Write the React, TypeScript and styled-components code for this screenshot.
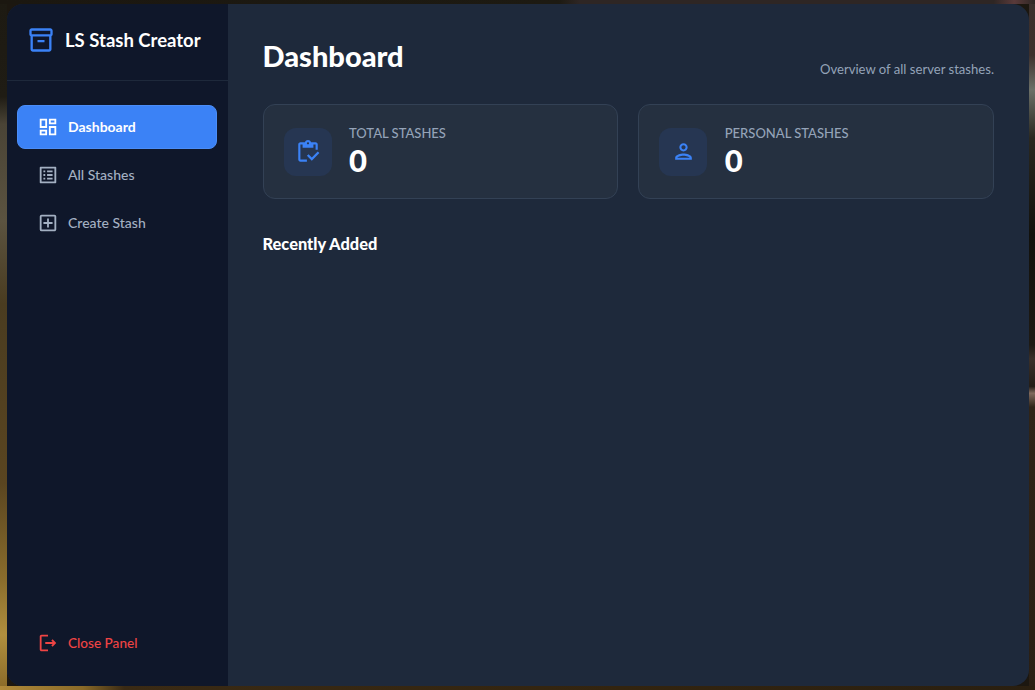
import { createGlobalStyle, styled } from "styled-components";
import {
  MdOutlineAddBox,
  MdOutlineDashboard,
  MdOutlineInventory,
  MdOutlineInventory2,
  MdOutlineListAlt,
  MdOutlineLogout,
  MdOutlinePerson,
} from "react-icons/md";

const GlobalStyle = createGlobalStyle`
  html, body {
    margin: 0;
    height: 100%;
  }

  body {
    font-family: "Lato", "Noto Sans", sans-serif;
    overflow: hidden;
    background-color: #1c1710;
    background-image:
      linear-gradient(90deg, #1b1710 0%, #1d1a12 54%, #2e2624 56%, #2e2624 96%, #5a3a3a 98%, #2e2624 100%),
      linear-gradient(90deg, #b08a3a 0%, #8a6a28 8%, #3a2a14 12%, #33240f 60%, #2a1f10 100%),
      linear-gradient(180deg, #1d1a12 0%, #1f1c14 14%, #4a4436 18%, #5b5340 32%, #4a3c20 44%, #5a4520 70%, #8a6d2c 84%, #b08f3e 92%, #8a6a28 100%),
      linear-gradient(180deg, #3a2f2c 0%, #3d302d 8%, #6c7068 13%, #2a2820 20%, #12110c 34%, #1e1a14 50%, #3a302a 52%, #241d16 56%, #80695c 57%, #2f2418 59%, #2a1f14 100%);
    background-size: 100% 4px, 100% 4px, 7px 100%, 6px 100%;
    background-position: left top, left bottom, left top, right top;
    background-repeat: no-repeat;
  }
`;

const Screen = styled.div`
  box-sizing: border-box;
  width: 1035px;
  height: 690px;
  padding: 4px 6px 4px 7px;
`;

const Panel = styled.div`
  display: flex;
  height: 100%;
  border-radius: 16px;
  overflow: hidden;
  background: #1e293b;
`;

const Sidebar = styled.aside`
  box-sizing: border-box;
  width: 222px;
  flex-shrink: 0;
  display: flex;
  flex-direction: column;
  background: #0f172a;
  border-right: 1px solid #1e293b;
`;

const Brand = styled.div`
  height: 77px;
  box-sizing: border-box;
  display: flex;
  align-items: center;
  gap: 10px;
  padding: 0 0 4px 20px;
  border-bottom: 1px solid #1e293b;
  color: #3b82f6;
`;

const BrandName = styled.span`
  color: #fff;
  font-size: 18.5px;
  font-weight: 700;
`;

const Nav = styled.nav`
  flex: 1;
  display: flex;
  flex-direction: column;
  gap: 4px;
  padding: 24px 11px 0 10px;
`;

const NavItem = styled.div<{ $active?: boolean }>`
  height: 44px;
  box-sizing: border-box;
  display: flex;
  align-items: center;
  gap: 9px;
  padding: 0 0 1px 19px;
  border: 1px solid ${(p) => (p.$active ? "#4b8df7" : "transparent")};
  border-radius: 8px;
  font-size: 14px;
  font-weight: ${(p) => (p.$active ? 700 : 500)};
  color: ${(p) => (p.$active ? "#fff" : "#a3b0c2")};
  background: ${(p) => (p.$active ? "#3b82f6" : "transparent")};
`;

const CloseItem = styled(NavItem)`
  margin: 0 11px 21px 10px;
  font-size: 13.6px;
  color: #ef4444;
`;

const Main = styled.main`
  flex: 1;
  padding: 34px 35px 0 33.5px;
`;

const Header = styled.header`
  display: flex;
  justify-content: space-between;
  align-items: flex-end;
  margin-bottom: 30px;
`;

const Title = styled.h1`
  margin: 0;
  color: #fff;
  font-size: 29px;
  line-height: 36px;
  font-weight: 900;
`;

const Subtitle = styled.p`
  margin: 0 0 -4px;
  color: #94a3b8;
  font-size: 13.1px;
  line-height: 18px;
`;

const Stats = styled.section`
  display: grid;
  grid-template-columns: 1fr 1fr;
  gap: 20px;
`;

const Card = styled.div`
  height: 95px;
  box-sizing: border-box;
  display: flex;
  align-items: center;
  gap: 17.5px;
  padding: 0 20px;
  background: #253040;
  border: 1px solid #334155;
  border-radius: 12px;
`;

const IconTile = styled.div`
  width: 48px;
  height: 48px;
  display: flex;
  align-items: center;
  justify-content: center;
  border-radius: 12px;
  background: #263652;
  color: #3b82f6;
`;

const CardText = styled.div`
  display: flex;
  flex-direction: column;
  gap: 3px;
  margin-bottom: 3px;
`;

const CardLabel = styled.div`
  color: #94a3b8;
  font-size: 13px;
  line-height: 16px;
  font-weight: 500;
`;

const CardValue = styled.div`
  color: #fff;
  font-size: 31px;
  line-height: 32px;
  font-weight: 900;
`;

const SectionTitle = styled.h2`
  margin: 35px 0 0;
  color: #fff;
  font-size: 16.4px;
  line-height: 20px;
  font-weight: 900;
`;

export default function App() {
  return (
    <>
      <GlobalStyle />
      <Screen>
        <Panel>
          <Sidebar>
            <Brand>
              <MdOutlineInventory2 size={28} />
              <BrandName>LS Stash Creator</BrandName>
            </Brand>
            <Nav>
              <NavItem $active>
                <MdOutlineDashboard size={22} />
                Dashboard
              </NavItem>
              <NavItem>
                <MdOutlineListAlt size={22} />
                All Stashes
              </NavItem>
              <NavItem>
                <MdOutlineAddBox size={22} />
                Create Stash
              </NavItem>
            </Nav>
            <CloseItem>
              <MdOutlineLogout size={22} />
              Close Panel
            </CloseItem>
          </Sidebar>
          <Main>
            <Header>
              <Title>Dashboard</Title>
              <Subtitle>Overview of all server stashes.</Subtitle>
            </Header>
            <Stats>
              <Card>
                <IconTile>
                  <MdOutlineInventory size={26} />
                </IconTile>
                <CardText>
                  <CardLabel>TOTAL STASHES</CardLabel>
                  <CardValue>0</CardValue>
                </CardText>
              </Card>
              <Card>
                <IconTile>
                  <MdOutlinePerson size={25} />
                </IconTile>
                <CardText>
                  <CardLabel>PERSONAL STASHES</CardLabel>
                  <CardValue>0</CardValue>
                </CardText>
              </Card>
            </Stats>
            <SectionTitle>Recently Added</SectionTitle>
          </Main>
        </Panel>
      </Screen>
    </>
  );
}
